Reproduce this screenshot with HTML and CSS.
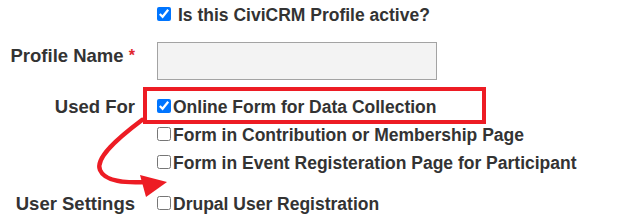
FILE: index.html
```html
<!DOCTYPE html>
<html lang="en">
<head>
    <meta charset="UTF-8">
    <meta name="viewport" content="width=device-width, initial-scale=1.0">
    <title>Profile Settings</title>
    <link rel="stylesheet" href="styles.css">
</head>
<body>
    <div class="form">
        <div class="label"></div>
        <div class="field">
            <label class="check check_main"><input type="checkbox" checked>Is this CiviCRM Profile active?</label>
        </div>

        <div class="label">Profile Name <span class="marker">*</span></div>
        <div class="field">
            <input type="text" class="text_input">
        </div>

        <div class="label">Used For</div>
        <div class="field">
            <label class="check"><input type="checkbox" checked>Online Form for Data Collection</label>
            <label class="check"><input type="checkbox">Form in Contribution or Membership Page</label>
            <label class="check"><input type="checkbox">Form in Event Registeration Page for Participant</label>
        </div>

        <div class="label">User Settings</div>
        <div class="field">
            <label class="check"><input type="checkbox">Drupal User Registration</label>
        </div>

        <!-- annotation -->
        <span class="highlight"></span>
        <svg class="arrow" width="617" height="222" viewBox="0 0 617 222">
            <path d="M142 120 C118 138 95 158 100 170 C105 182 126 183 146 182" fill="none" stroke="#ed1c24" stroke-width="4.5" stroke-linecap="round"/>
            <polygon points="140,175 167,182 146,197" fill="#ed1c24"/>
        </svg>
    </div>
</body>
</html>
```

FILE: styles.css
```css
* {
    margin: 0;
    padding: 0;
    box-sizing: border-box;
}
body {
    background-color: #fff;
    font-family: "Liberation Sans", Arial, sans-serif;
    color: #333;
}
.form {
    position: relative;
    display: grid;
    grid-template-columns: 135px auto;
    align-content: start;
    column-gap: 22px;
    row-gap: 13px;
    padding-top: 1px;
    width: 617px;
    height: 222px;
}
.label {
    text-align: right;
    font-size: 18.5px;
    font-weight: 700;
    line-height: 28px;
}
.marker {
    color: #e0262d;
    font-size: 16px;
    vertical-align: top;
}
.field {
    display: flex;
    flex-direction: column;
}
.check {
    font-size: 17.5px;
    font-weight: 700;
    line-height: 28px;
    white-space: nowrap;
}
.check input {
    width: 14px;
    height: 14px;
    margin: 0 2px 0 0;
    vertical-align: middle;
    position: relative;
    top: -2px;
}
.check_main input {
    margin-right: 7px;
}
.text_input {
    width: 280px;
    height: 38px;
    border: 1px solid #a3a3a3;
    background-color: #f3f3f3;
    outline: none;
}
.highlight {
    position: absolute;
    left: 143px;
    top: 87px;
    width: 343px;
    height: 37px;
    border: 4px solid #ed1c24;
}
.arrow {
    position: absolute;
    left: 0;
    top: 0;
    pointer-events: none;
}
```
